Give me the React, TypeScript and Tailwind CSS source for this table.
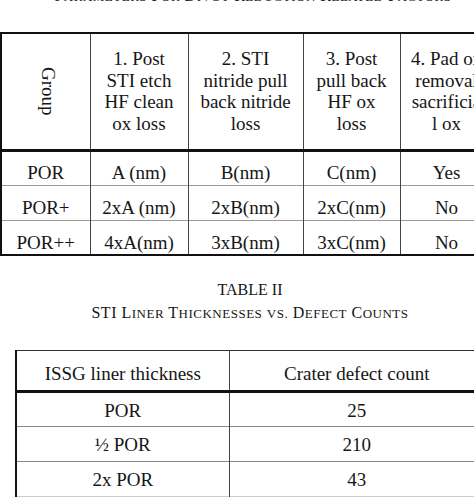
const serif = { fontFamily: '"Liberation Serif", "Times New Roman", serif' };

const defectHeader = [
  ['1. Post', 'STI etch', 'HF clean', 'ox loss'],
  ['2. STI', 'nitride pull', 'back nitride', 'loss'],
  ['3. Post', 'pull back', 'HF ox', 'loss'],
  ['4. Pad ox', 'removal', 'sacrificia', 'l ox'],
];

const defectRows = [
  ['POR', 'A (nm)', 'B(nm)', 'C(nm)', 'Yes'],
  ['POR+', '2xA (nm)', '2xB(nm)', '2xC(nm)', 'No'],
  ['POR++', '4xA(nm)', '3xB(nm)', '3xC(nm)', 'No'],
];

const linerRows = [
  ['POR', '25'],
  ['½ POR', '210'],
  ['2x POR', '43'],
];

// IEEE style caption: first letter of each word full size, rest as small caps.
// Words already in capitals (acronyms) stay full size.
function SmallCaps({ text }: { text: string }) {
  const words = text.split(' ');
  return (
    <>
      {words.map((w, i) => {
        const acronym = w === w.toUpperCase();
        const lead = /^[A-Z]/.test(w) ? w[0] : '';
        return (
          <span key={i}>
            {i > 0 && ' '}
            {acronym ? (
              w
            ) : (
              <>
                {lead}
                <span className="text-[13px] uppercase">{lead ? w.slice(1) : w}</span>
              </>
            )}
          </span>
        );
      })}
    </>
  );
}

export default function App() {
  return (
    <div className="h-[499px] w-[474px] overflow-hidden bg-white text-[#161616]" style={serif}>
      {/* title of table I, cut off by the top of the crop */}
      <div className="-mt-[12px] h-[16px] w-[506px] overflow-hidden text-center text-[16px] leading-[16px] tracking-[0.5px] whitespace-nowrap">
        <SmallCaps text="Parameters For Divot Reduction Related Factors" />
      </div>

      <table className="mt-[28px] w-[492px] table-fixed border-collapse text-[19px] leading-[21.5px]">
        <colgroup>
          <col className="w-[89px]" />
          <col className="w-[98px]" />
          <col className="w-[115px]" />
          <col className="w-[97px]" />
          <col className="w-[93px]" />
        </colgroup>
        <thead>
          <tr className="h-[117px] border-t-2 border-b-[3px] border-l-2 border-[#111]">
            <th className="border-r border-[#444] font-normal">
              <div className="flex justify-center pl-[4px]">
                <span className="[writing-mode:vertical-rl]">Group</span>
              </div>
            </th>
            {defectHeader.map((lines, i) => (
              <th key={i} className="border-r border-[#444] px-1 text-center font-normal">
                <div className="flex flex-col items-center whitespace-nowrap">
                  {lines.map((l) => (
                    <span key={l}>{l}</span>
                  ))}
                </div>
              </th>
            ))}
          </tr>
        </thead>
        <tbody>
          {defectRows.map((row, r) => (
            <tr
              key={row[0]}
              className={
                'h-[35px] border-l-2 border-[#111] ' +
                (r === defectRows.length - 1 ? 'border-b-2' : 'border-b border-b-[#999]')
              }
            >
              {row.map((cell, c) => (
                <td key={c} className="border-r border-r-[#444] pt-[10px] pb-0 text-center whitespace-nowrap">
                  {cell}
                </td>
              ))}
            </tr>
          ))}
        </tbody>
      </table>

      <div className="mt-[24px] h-[20px] w-[500px] text-center text-[16px] leading-[20px]">TABLE II</div>
      <div className="mt-[3px] h-[20px] w-[500px] text-center text-[16px] leading-[20px] tracking-[0.5px] whitespace-nowrap">
        <SmallCaps text="STI Liner Thicknesses vs. Defect Counts" />
      </div>

      <table className="mt-[27px] ml-[15px] w-[468px] table-fixed border-collapse text-[19px] leading-[22px]">
        <colgroup>
          <col className="w-[213px]" />
          <col className="w-[255px]" />
        </colgroup>
        <thead>
          <tr className="h-[41px] border-t border-b-[3px] border-l-2 border-[#111] border-t-[#333]">
            <th className="border-r border-[#444] pt-[6px] font-normal">ISSG liner thickness</th>
            <th className="pt-[6px] font-normal">Crater defect count</th>
          </tr>
        </thead>
        <tbody>
          {linerRows.map(([a, b], r) => (
            <tr
              key={a}
              className={
                'h-[35px] border-l-2 border-l-[#111] border-b ' +
                (r === linerRows.length - 1 ? 'border-b-[#ccc]' : 'border-b-[#888]')
              }
            >
              <td className="border-r border-r-[#444] pt-[2px] text-center">{a}</td>
              <td className="pt-[2px] text-center">{b}</td>
            </tr>
          ))}
        </tbody>
      </table>
    </div>
  );
}
